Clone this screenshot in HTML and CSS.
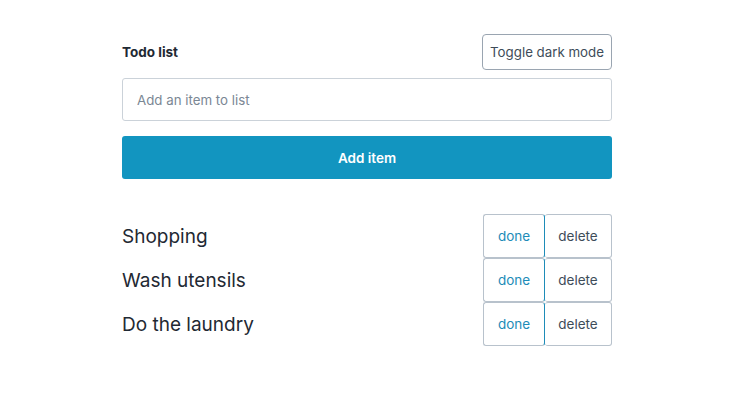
FILE: index.html
```html
<!DOCTYPE html>
<html lang="en">
<head>
<meta charset="utf-8">
<title>Todo list</title>
<link rel="stylesheet" href="styles.css">
</head>
<body>
<main class="app">
  <header class="top">
    <h1 class="title">Todo list</h1>
    <button class="toggle" type="button">Toggle dark mode</button>
  </header>
  <input class="field" type="text" placeholder="Add an item to list">
  <button class="add" type="button">Add item</button>
  <ul class="list">
    <li class="item"><span class="label">Shopping</span><span class="actions"><button class="done" type="button">done</button><button class="del" type="button">delete</button></span></li>
    <li class="item"><span class="label">Wash utensils</span><span class="actions"><button class="done" type="button">done</button><button class="del" type="button">delete</button></span></li>
    <li class="item"><span class="label">Do the laundry</span><span class="actions"><button class="done" type="button">done</button><button class="del" type="button">delete</button></span></li>
  </ul>
</main>
</body>
</html>
```
FILE: styles.css
```css
* { box-sizing: border-box; }
html, body { margin: 0; background: #ffffff; }
body {
  font-family: Inter, "Noto Sans", "Liberation Sans", sans-serif;
  color: #1f2933;
}
.app {
  width: 490px;
  margin-left: 122px;
  padding-top: 34px;
  display: flex;
  flex-direction: column;
}
.top {
  display: flex;
  justify-content: space-between;
  align-items: center;
  height: 36px;
}
.title {
  margin: 0;
  font-size: 13.5px;
  font-weight: 700;
  color: #1f2933;
}
.toggle {
  height: 36px;
  padding: 0 7px;
  border: 1px solid #9aa5b1;
  border-radius: 4px;
  background: #fff;
  font-family: inherit;
  font-size: 13.3px;
  color: #3e4c59;
}
.field {
  margin-top: 8px;
  height: 43px;
  padding: 0 14px;
  border: 1px solid #cbd2d9;
  border-radius: 3px;
  font-family: inherit;
  font-size: 13.3px;
  color: #1f2933;
  outline: none;
}
.field::placeholder { color: #7b8794; }
.add {
  margin-top: 15px;
  height: 43px;
  border: none;
  border-radius: 3px;
  background: #1295c0;
  color: #fff;
  font-family: inherit;
  font-size: 13.5px;
  font-weight: 600;
}
.list {
  list-style: none;
  margin: 35px 0 0;
  padding: 0;
}
.item {
  display: flex;
  justify-content: space-between;
  align-items: center;
  height: 44px;
}
.label {
  font-size: 19px;
  color: #1f2933;
}
.actions { display: flex; height: 44px; }
.actions button {
  height: 44px;
  background: #fff;
  border: 1px solid #b8c2cc;
  border-radius: 3px;
  font-family: inherit;
  font-size: 13.5px;
}
.done {
  width: 62px;
  color: #1e8cb8;
  border-right-color: #1e8cb8 !important;
}
.del {
  width: 67px;
  color: #3e4c59;
  border-left: none !important;
}
```
